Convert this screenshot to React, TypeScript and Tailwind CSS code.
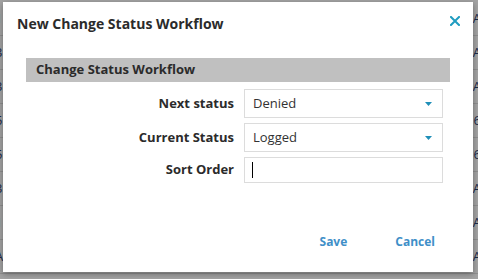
import React from "react";

const leftChars = ["1", "3", "3", "5", "5", "3", "1", "A"];
const rightChars = ["A", "A", "A", "6", "6", "A", "A", "A"];

function Caret() {
  return (
    <svg width="7" height="4" viewBox="0 0 7 4" className="shrink-0">
      <path d="M0 0 L7 0 L3.5 4 Z" fill="#1f8fb8" />
    </svg>
  );
}

export default function App() {
  return (
    <div
      className="relative w-[478px] h-[279px] overflow-hidden bg-[#a3a3a3]"
      style={{ fontFamily: '"Open Sans", "Noto Sans", sans-serif' }}
    >
      {/* dimmed background table */}
      <div className="flex flex-col pt-[2px]">
        {leftChars.map((c, i) => (
          <div
            key={i}
            className="h-[34px] border-b border-[#8f8f8f] flex items-center justify-between text-[13px] text-[#1b2a4a]"
          >
            <span className="-ml-[5px]">{c}</span>
            <span className="-mr-[3px]">{rightChars[i]}</span>
          </div>
        ))}
      </div>

      {/* dialog */}
      <div className="absolute left-[3px] top-[2px] w-[470px] h-[270px] bg-white shadow-[0_2px_6px_rgba(0,0,0,0.35)] flex flex-col">
        <div className="flex items-start justify-between pl-[14px] pr-[13px] pt-[12px] h-[56px]">
          <h1 className="text-[14px] leading-[20px] font-bold text-[#2b2b2b]">
            New Change Status Workflow
          </h1>
          <svg width="10" height="10" viewBox="0 0 10 10" className="mt-[2px]">
            <path d="M1 1 L9 9 M9 1 L1 9" stroke="#1f9cc0" strokeWidth="2" strokeLinecap="square" />
          </svg>
        </div>

        <div className="px-[23px]">
          <div className="h-[24px] bg-[#c0c0c0] flex items-center pl-[10px] text-[13px] font-bold text-[#2b2b2b]">
            Change Status Workflow
          </div>

          <div className="grid grid-cols-[208px_199px] gap-x-[10px] gap-y-[5px] mt-[7px] items-center">
            <label className="text-right text-[13px] font-bold text-[#2b2b2b]">Next status</label>
            <div className="h-[29px] border border-[#dcdcdc] flex items-center justify-between pl-[8px] pr-[10px] text-[13px] text-[#333]">
              <span>Denied</span>
              <Caret />
            </div>

            <label className="text-right text-[13px] font-bold text-[#2b2b2b]">Current Status</label>
            <div className="h-[29px] border border-[#dcdcdc] flex items-center justify-between pl-[8px] pr-[10px] text-[13px] text-[#333]">
              <span>Logged</span>
              <Caret />
            </div>

            <label className="text-right text-[13px] font-bold text-[#2b2b2b]">Sort Order</label>
            <div className="h-[26px] border border-[#dcdcdc] flex items-center pl-[7px]">
              <div className="w-[1px] h-[16px] bg-black" />
            </div>
          </div>
        </div>

        <div className="flex justify-end gap-[48px] pr-[38px] mt-[50px] text-[12px] font-bold text-[#3f8fc8]">
          <span>Save</span>
          <span>Cancel</span>
        </div>
      </div>
    </div>
  );
}
